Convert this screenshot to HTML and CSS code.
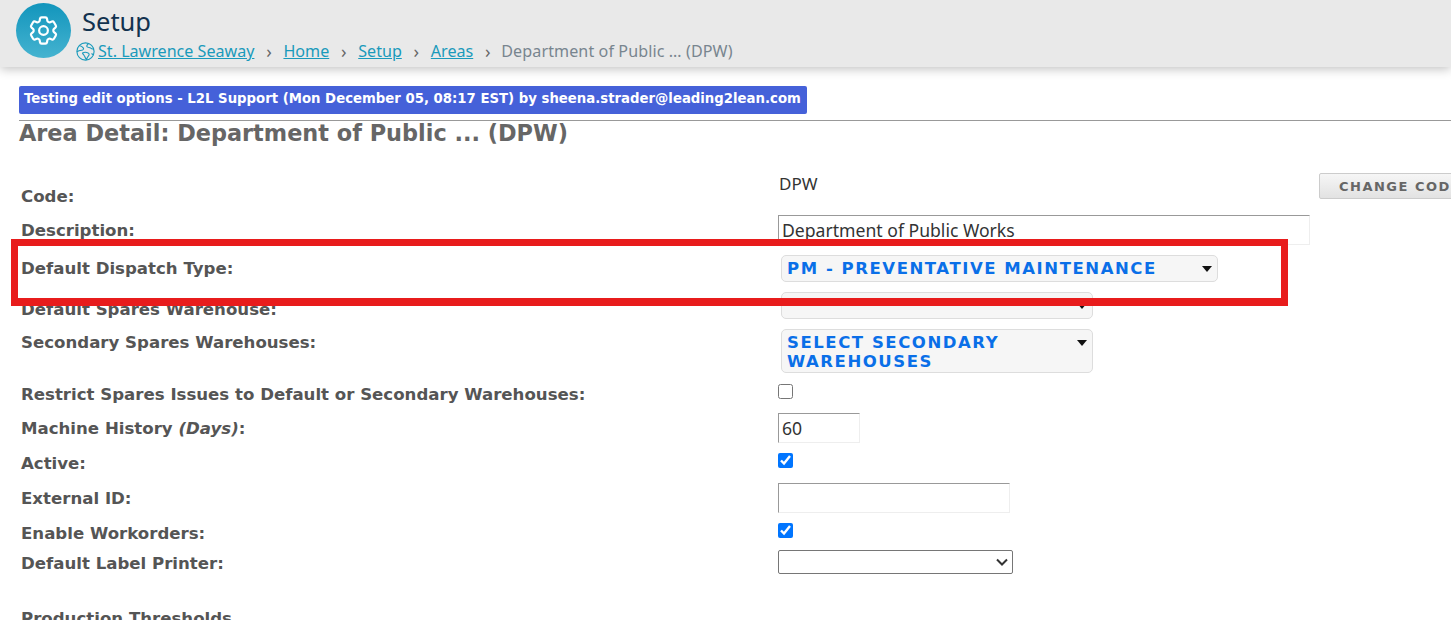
FILE: index.html
```html
<!DOCTYPE html>
<html lang="en">
<head>
    <meta charset="UTF-8">
    <meta name="viewport" content="width=device-width, initial-scale=1.0">
    <title>Area Detail</title>
    <link rel="stylesheet" href="styles.css">
</head>
<body>
    <header class="top-bar">
        <div class="app-icon">
            <svg width="35" height="35" viewBox="0 0 24 24" fill="none" stroke="#fff" stroke-width="1.5" stroke-linecap="round" stroke-linejoin="round">
                <path d="M9.594 3.94c.09-.542.56-.94 1.11-.94h2.593c.55 0 1.02.398 1.11.94l.213 1.281c.063.374.313.686.645.87.074.04.147.083.22.127.324.196.72.257 1.075.124l1.217-.456a1.125 1.125 0 011.37.49l1.296 2.247a1.125 1.125 0 01-.26 1.431l-1.003.827c-.293.24-.438.613-.431.992a6.759 6.759 0 010 .255c-.007.378.138.75.43.99l1.005.828c.424.35.534.954.26 1.43l-1.298 2.247a1.125 1.125 0 01-1.369.491l-1.217-.456c-.355-.133-.75-.072-1.076.124a6.57 6.57 0 01-.22.128c-.331.183-.581.495-.644.869l-.213 1.28c-.09.543-.56.941-1.11.941h-2.594c-.55 0-1.02-.398-1.11-.94l-.213-1.281c-.062-.374-.312-.686-.644-.87a6.52 6.52 0 01-.22-.127c-.325-.196-.72-.257-1.076-.124l-1.217.456a1.125 1.125 0 01-1.369-.49l-1.297-2.247a1.125 1.125 0 01.26-1.431l1.004-.827c.292-.24.437-.613.43-.992a6.932 6.932 0 010-.255c.007-.378-.138-.75-.43-.99l-1.004-.828a1.125 1.125 0 01-.26-1.43l1.297-2.247a1.125 1.125 0 011.37-.491l1.216.456c.356.133.751.072 1.076-.124.072-.044.146-.087.22-.128.332-.183.582-.495.644-.869l.214-1.281z"/>
                <circle cx="12" cy="12" r="3"/>
            </svg>
        </div>
        <div class="top-text">
            <div class="page-name">Setup</div>
            <nav class="crumbs">
                <svg class="globe" width="19" height="19" viewBox="0 0 19 19" fill="none" stroke="#1a9abb" stroke-width="1.1" stroke-linejoin="round">
                    <circle cx="9.500" cy="9.500" r="8.600"/>
                    <path d="M3 3.500c2.200 .3 3.600 1.300 4.400 2.600 .6 1-.5 2-1.800 2.200-1.500 .2-3.200 .5-4.500 1.500"/>
                    <path d="M12.500 1.500c-1.300 1.200-2.200 2.300-1.500 3.300 .7 1 2.800 .5 3.800 1.400 .7 .7 1.700 .9 2.800 .7"/>
                    <path d="M6.500 11c1.500-.8 3.800-.9 5.600-.1 1.300 .6 1.300 2 .4 3-.8 .9-1.500 2-1.900 3.700-1.300-1-1.500-2.500-2.100-3.600-.5-1-1.600-1.500-2-3z"/>
                    <path d="M15.500 11.500l2 1.500"/>
                </svg>
                <a href="#">St. Lawrence Seaway</a>
                <span class="sep">›</span>
                <a href="#">Home</a>
                <span class="sep">›</span>
                <a href="#">Setup</a>
                <span class="sep">›</span>
                <a href="#">Areas</a>
                <span class="sep">›</span>
                <span class="crumb-current">Department of Public … (DPW)</span>
            </nav>
        </div>
    </header>

    <main class="content">
        <div class="notice">Testing edit options - L2L Support (Mon December 05, 08:17 EST) by sheena.strader@leading2lean.com</div>
        <h1 class="detail-title">Area Detail: Department of Public ... (DPW)</h1>

        <div class="detail-form">
            <div class="row row-code">
                <label class="field-label">Code:</label>
                <div class="field-value code-value">DPW</div>
                <button class="change-btn">CHANGE CODE</button>
            </div>
            <div class="row row-desc">
                <label class="field-label">Description:</label>
                <div class="field-value"><input class="text-input desc-input" type="text" value="Department of Public Works"></div>
            </div>
            <div class="row row-dispatch">
                <label class="field-label">Default Dispatch Type:</label>
                <div class="field-value"><div class="fancy-select dispatch-select"><span>PM - PREVENTATIVE MAINTENANCE</span><i class="caret"></i></div></div>
            </div>
            <div class="row row-spares">
                <label class="field-label">Default Spares Warehouse:</label>
                <div class="field-value"><div class="fancy-select spares-select"><span></span><i class="caret"></i></div></div>
            </div>
            <div class="row row-secondary">
                <label class="field-label">Secondary Spares Warehouses:</label>
                <div class="field-value"><div class="fancy-select spares-select tall"><span>SELECT SECONDARY WAREHOUSES</span><i class="caret"></i></div></div>
            </div>
            <div class="row row-restrict">
                <label class="field-label">Restrict Spares Issues to Default or Secondary Warehouses:</label>
                <div class="field-value"><input class="check" type="checkbox"></div>
            </div>
            <div class="row row-history">
                <label class="field-label">Machine History <em>(Days)</em>:</label>
                <div class="field-value"><input class="text-input days-input" type="text" value="60"></div>
            </div>
            <div class="row row-active">
                <label class="field-label">Active:</label>
                <div class="field-value"><input class="check" type="checkbox" checked></div>
            </div>
            <div class="row row-external">
                <label class="field-label">External ID:</label>
                <div class="field-value"><input class="text-input external-input" type="text"></div>
            </div>
            <div class="row row-workorders">
                <label class="field-label">Enable Workorders:</label>
                <div class="field-value"><input class="check" type="checkbox" checked></div>
            </div>
            <div class="row row-printer">
                <label class="field-label">Default Label Printer:</label>
                <div class="field-value">
                    <div class="select-wrap">
                        <select class="plain-select"><option></option></select>
                        <svg class="chevron" width="12" height="8" viewBox="0 0 12 8" fill="none" stroke="#333" stroke-width="2"><path d="M1 1.500l5 5 5-5"/></svg>
                    </div>
                </div>
            </div>
            <div class="row row-thresholds">
                <label class="field-label">Production Thresholds</label>
            </div>
        </div>
    </main>

    <!-- annotation drawn over the screenshot -->
    <div class="highlight-box"></div>
</body>
</html>
```

FILE: styles.css
```css
* {
    margin: 0;
    padding: 0;
    box-sizing: border-box;
}

html, body {
    height: 100%;
    overflow: hidden;
}

body {
    position: relative;
    background: #fff;
    font-family: "DejaVu Sans", Verdana, sans-serif;
}

.top-bar {
    display: flex;
    height: 67px;
    padding: 3px 0 0 16px;
    background: #e9e9e9;
    box-shadow: 0 2px 10px rgba(0, 0, 0, 0.25);
}

.app-icon {
    display: flex;
    align-items: center;
    justify-content: center;
    width: 55px;
    height: 55px;
    border-radius: 50%;
    background: linear-gradient(180deg, #1295bc 0%, #45b3d0 100%);
}

.top-text {
    margin-left: 5px;
    font-family: "Noto Sans", sans-serif;
}

.page-name {
    height: 36px;
    padding-left: 6px;
    font-size: 25.5px;
    line-height: 37px;
    color: #12324f;
}

.crumbs {
    display: flex;
    align-items: center;
    height: 24px;
    font-size: 16.1px;
    white-space: nowrap;
}

.globe {
    margin-right: 3px;
}

.crumbs a {
    color: #1a9abb;
}

.sep {
    width: 29px;
    text-align: center;
    font-size: 18px;
    color: #666;
}

.crumb-current {
    margin-left: -1px;
    color: #78858f;
    letter-spacing: 0.1px;
}

.content {
    padding: 19px 0 0 19px;
}

.notice {
    width: 788px;
    height: 28px;
    padding-left: 5px;
    border-radius: 2px;
    background: #4561d9;
    color: #fff;
    font-size: 13.28px;
    font-weight: bold;
    line-height: 25px;
    white-space: nowrap;
}

.detail-title {
    height: 53px;
    margin-top: 6px;
    border-top: 1px solid #999;
    color: #666;
    font-size: 22.4px;
    font-weight: bold;
    line-height: 24px;
    white-space: nowrap;
}

.detail-form {
    padding-left: 2px;
}

.row {
    display: flex;
    align-items: flex-start;
}

.field-label {
    flex: 0 0 757px;
    color: #555;
    font-size: 16.6px;
    font-weight: bold;
    line-height: 22px;
    white-space: nowrap;
}

.field-value {
    flex: 0 0 541px;
    font-family: "Noto Sans", sans-serif;
    font-size: 17px;
    color: #333;
}

.row-code { height: 42px; }
.row-code .field-label { padding-top: 13px; }
.row-desc { height: 40px; }
.row-desc .field-label { padding-top: 5px; }
.row-dispatch { height: 37px; }
.row-dispatch .field-label { padding-top: 3px; }
.row-spares { height: 37px; }
.row-spares .field-label { padding-top: 7px; }
.row-secondary { height: 55px; }
.row-secondary .field-label { padding-top: 3px; }
.row-restrict { height: 29px; }
.row-history { height: 40px; }
.row-history .field-label { padding-top: 5px; }
.row-active { height: 30px; }
.row-external { height: 40px; }
.row-external .field-label { padding-top: 5px; }
.row-workorders { height: 27px; }
.row-printer { height: 57px; }
.row-printer .field-label { padding-top: 3px; }
.row-thresholds .field-label { padding-top: 1px; }

.code-value {
    padding-left: 1px;
    line-height: 22px;
}

.text-input {
    height: 30px;
    padding: 0 3px;
    border: 1px solid #eee;
    border-top-color: #999;
    border-left-color: #999;
    background: #fff;
    color: #333;
    font-family: "Noto Sans", sans-serif;
    font-size: 17.6px;
    line-height: 30px;
    outline: none;
}

.desc-input { width: 532px; }
.days-input { width: 82px; }
.external-input { width: 232px; }

.fancy-select {
    display: flex;
    justify-content: space-between;
    margin-left: 3px;
    padding: 3px 5px 0;
    border: 1px solid #ddd;
    border-radius: 5px;
    background: #f6f6f6;
    color: #0a6fe8;
    font-family: "DejaVu Sans", Verdana, sans-serif;
    font-size: 16.5px;
    font-weight: bold;
    letter-spacing: 1.55px;
    line-height: 19px;
}

.dispatch-select {
    width: 437px;
    height: 27px;
}

.spares-select {
    width: 312px;
    height: 27px;
}

.spares-select.tall {
    height: 44px;
}

.caret {
    flex: none;
    width: 0;
    height: 0;
    margin: 7px 0 0 8px;
    border-top: 6px solid #111;
    border-left: 5px solid transparent;
    border-right: 5px solid transparent;
}

.check {
    display: block;
    width: 15px;
    height: 15px;
}

.select-wrap {
    position: relative;
    width: 235px;
}

.plain-select {
    display: block;
    width: 235px;
    height: 24px;
    border: 1px solid #767676;
    border-radius: 2px;
    background: #fff;
    font-size: 14px;
    appearance: none;
}

.chevron {
    position: absolute;
    right: 5px;
    top: 8px;
    pointer-events: none;
}

.change-btn {
    flex: none;
    width: 170px;
    height: 26px;
    padding-left: 19px;
    border: 1px solid #ccc;
    border-radius: 2px;
    background: linear-gradient(180deg, #f6f6f6 0%, #e2e2e2 100%);
    color: #666;
    font-family: "DejaVu Sans", Verdana, sans-serif;
    font-size: 13px;
    font-weight: bold;
    letter-spacing: 1.5px;
    text-align: left;
}

.highlight-box {
    position: absolute;
    left: 11px;
    top: 239px;
    width: 1277px;
    height: 67px;
    border: 7px solid #e81c1c;
    border-bottom-width: 8px;
}
```
